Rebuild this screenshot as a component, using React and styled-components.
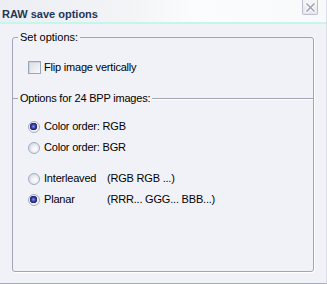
import React from 'react';
import styled, { createGlobalStyle } from 'styled-components';

const GlobalStyle = createGlobalStyle`
  html, body {
    margin: 0;
    padding: 0;
    background: #f1f2f8;
  }
`;

export default function App() {
  return (
    <>
      <GlobalStyle />
      <Window>
        <TitleBar>
          <Title>RAW save options</Title>
          <CloseButton>
            <svg width="13" height="13" viewBox="0 0 13 13">
              <path d="M3 3 L10 10 M10 3 L3 10" stroke="#ffffff" strokeWidth="3.4" strokeLinecap="square" />
              <path d="M3 3 L10 10 M10 3 L3 10" stroke="#a2a6b4" strokeWidth="1.6" strokeLinecap="square" />
            </svg>
          </CloseButton>
        </TitleBar>
        <Body>
          <Group>
            <Legend>Set options:</Legend>
            <Row $top={17}>
              <Checkbox />
              <Label>Flip image vertically</Label>
            </Row>
            <Separator $top={18}>
              <Dash />
              <SepLabel>Options for 24 BPP images:</SepLabel>
              <Line />
            </Separator>
            <Row $top={15}>
              <Radio $checked />
              <Label>Color order: RGB</Label>
            </Row>
            <Row $top={8}>
              <Radio />
              <Label>Color order: BGR</Label>
            </Row>
            <Row $top={18}>
              <Radio />
              <Label $width={63}>Interleaved</Label>
              <Label>(RGB RGB ...)</Label>
            </Row>
            <Row $top={8}>
              <Radio $checked />
              <Label $width={63}>Planar</Label>
              <Label>(RRR... GGG... BBB...)</Label>
            </Row>
          </Group>
        </Body>
      </Window>
    </>
  );
}

const Window = styled.div`
  width: 327px;
  height: 284px;
  box-sizing: border-box;
  display: flex;
  flex-direction: column;
  background: #f1f2f8;
  border-bottom: 1px solid #a9abbb;
  border-right: 1px solid #dcdee8;
  font-family: "Liberation Sans", Arial, sans-serif;
  font-size: 11px;
  color: #000;
`;

const TitleBar = styled.div`
  height: 22px;
  flex: none;
  display: flex;
  justify-content: space-between;
  align-items: flex-start;
  background: linear-gradient(90deg, #eceef4 0%, #f2f4f6 40%, #fbfcfd 60%, #f8f9fb 100%);
  border-bottom: 2px solid #c4f6ec;
`;

const Title = styled.div`
  padding: 8px 0 0 2px;
  font-weight: bold;
  font-size: 11px;
  color: #1f3657;
  line-height: 12px;
`;

const CloseButton = styled.div`
  width: 16px;
  height: 15px;
  margin-right: 8px;
  box-sizing: border-box;
  border: 1px solid #bcc0ce;
  border-top: none;
  border-radius: 0 0 2px 2px;
  background: linear-gradient(180deg, #f4f5f8, #e4e6ed);
  display: flex;
  align-items: center;
  justify-content: center;
`;

const Body = styled.div`
  flex: 1;
  padding: 7px 12px 0 12px;
`;

const Group = styled.fieldset`
  margin: 0;
  height: 241px;
  box-sizing: border-box;
  padding: 0 5px;
  border: 1px solid #a3a4b8;
  border-radius: 3px;
  box-shadow: 1px 1px 0 #ffffff;
  display: flex;
  flex-direction: column;
`;

const Legend = styled.legend`
  padding: 0 2px;
  line-height: 13px;
  height: 13px;
`;

const Row = styled.div`
  height: 13px;
  margin-top: ${p => p.$top}px;
  margin-left: 10px;
  display: flex;
  align-items: center;
`;

const Label = styled.span`
  line-height: 13px;
  letter-spacing: -0.2px;
  white-space: nowrap;
  ${p => p.$width ? `width: ${p.$width}px; flex: none;` : ''}
`;

const Checkbox = styled.span`
  width: 13px;
  height: 13px;
  box-sizing: border-box;
  border: 1px solid #9aa6ba;
  background: linear-gradient(135deg, #dadde6 0%, #eceef3 60%, #f7f8fa 100%);
  box-shadow: inset 1px 1px 0 #ced2dc;
  margin-right: 3px;
  flex: none;
`;

const Radio = styled.span`
  width: 12px;
  height: 12px;
  box-sizing: border-box;
  border-radius: 50%;
  border: 1px solid #a2abbe;
  background: ${p => p.$checked
    ? 'radial-gradient(circle at 45% 45%, #8c92e0 0px, #2b2f9c 2.5px, #1f2378 3.5px, #eef0f5 4px, #fafbfc 100%)'
    : 'radial-gradient(circle at 60% 60%, #ffffff 0px, #eef0f5 3px, #d8dde8 6px)'};
  margin-right: 4px;
  flex: none;
`;

const Separator = styled.div`
  height: 13px;
  margin: ${p => p.$top}px -5px 0 -5px;
  display: flex;
  align-items: center;
`;

const Dash = styled.span`
  width: 5px;
  height: 1px;
  background: #a3a4b8;
  flex: none;
`;

const SepLabel = styled.span`
  padding: 0 2px;
  line-height: 13px;
  letter-spacing: -0.2px;
  white-space: nowrap;
`;

const Line = styled.span`
  flex: 1;
  height: 1px;
  background: #a3a4b8;
  box-shadow: 0 1px 0 #ffffff;
`;
